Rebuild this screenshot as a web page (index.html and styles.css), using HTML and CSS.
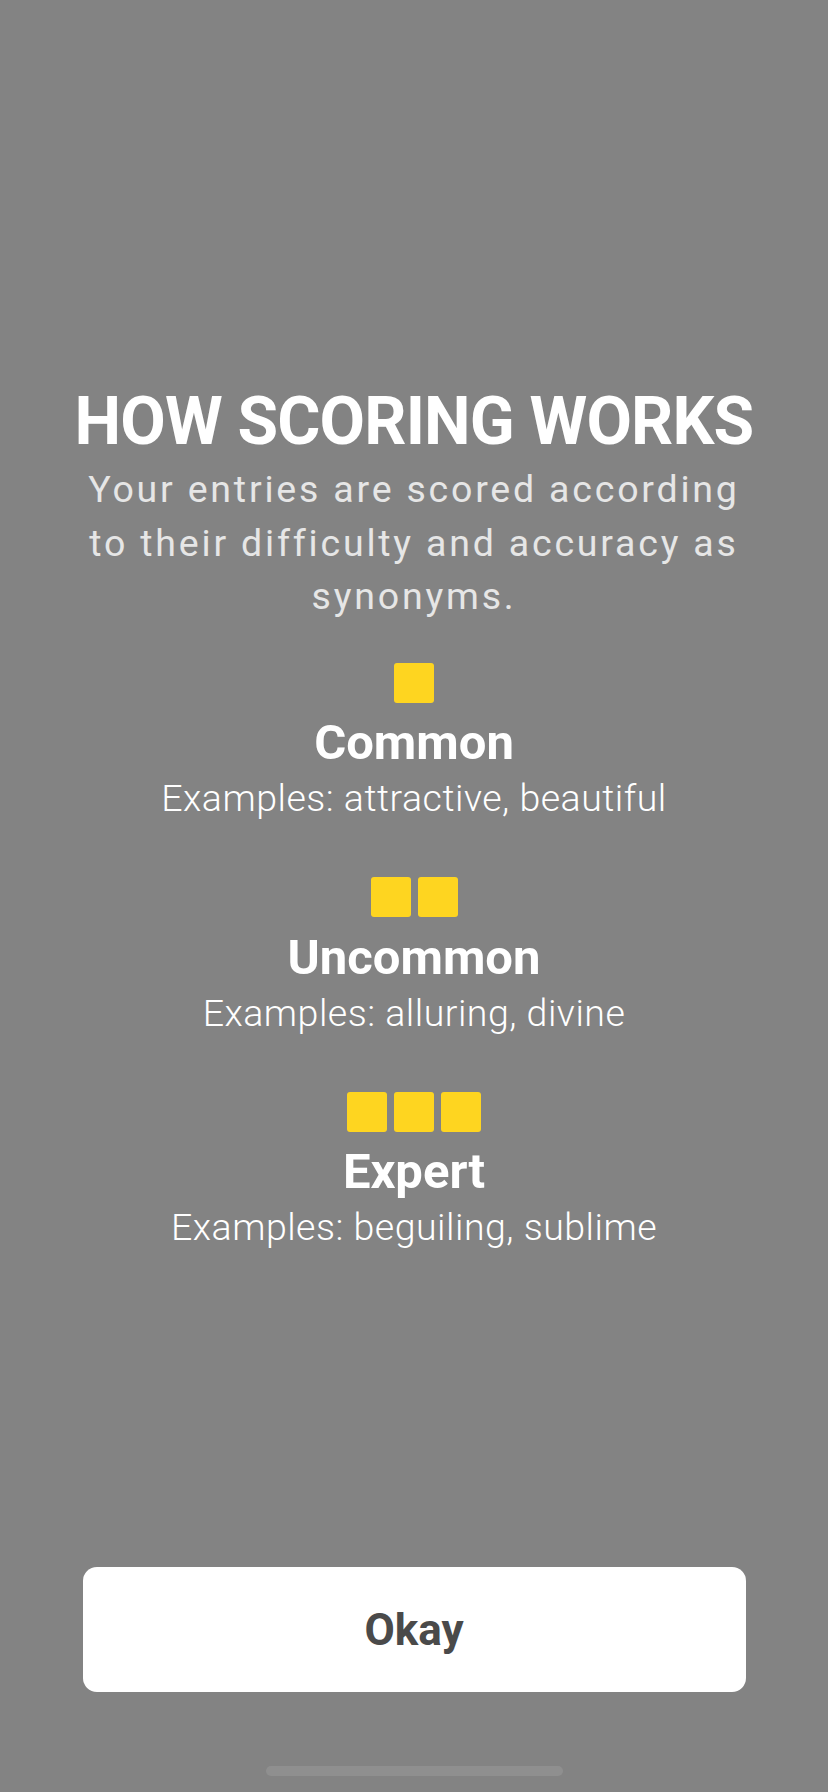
FILE: index.html
```html
<!DOCTYPE html>
<html lang="en">
<head>
<meta charset="utf-8">
<title>How Scoring Works</title>
<link rel="stylesheet" href="styles.css">
</head>
<body>
  <main class="content">
    <h1 class="title">HOW SCORING WORKS</h1>
    <p class="subtitle">Your entries are scored according to their difficulty and accuracy as synonyms.</p>

    <section class="level">
      <div class="squares"><span class="sq"></span></div>
      <h2 class="level-name">Common</h2>
      <p class="examples">Examples: attractive, beautiful</p>
    </section>

    <section class="level">
      <div class="squares"><span class="sq"></span><span class="sq"></span></div>
      <h2 class="level-name">Uncommon</h2>
      <p class="examples">Examples: alluring, divine</p>
    </section>

    <section class="level">
      <div class="squares"><span class="sq"></span><span class="sq"></span><span class="sq"></span></div>
      <h2 class="level-name">Expert</h2>
      <p class="examples">Examples: beguiling, sublime</p>
    </section>
  </main>

  <footer class="footer">
    <button class="okay" type="button">Okay</button>
    <div class="home-indicator"></div>
  </footer>
</body>
</html>
```

FILE: styles.css
```css
* { box-sizing: border-box; }

html, body {
  margin: 0;
  padding: 0;
}

body {
  width: 828px;
  height: 1792px;
  background: #838383;
  font-family: Roboto, "Noto Sans", "Liberation Sans", sans-serif;
  color: #ffffff;
  display: flex;
  flex-direction: column;
  overflow: hidden;
}

.content {
  display: flex;
  flex-direction: column;
  align-items: center;
  padding-top: 389px;
}

.title {
  margin: 0;
  font-size: 66px;
  line-height: 66px;
  font-weight: 700;
  letter-spacing: -0.85px;
  color: #ffffff;
  text-align: center;
}

.subtitle {
  margin: 8px 0 0;
  width: 670px;
  font-size: 37.5px;
  line-height: 53.6px;
  font-weight: 400;
  letter-spacing: 2.8px;
  color: #e6e6e6;
  text-align: center;
}

.level {
  display: flex;
  flex-direction: column;
  align-items: center;
  margin-top: 39px;
}

.level + .level {
  margin-top: 57px;
}

.squares {
  display: flex;
  gap: 7px;
  height: 40px;
}

.sq {
  width: 40px;
  height: 40px;
  border-radius: 3px;
  background: #fed520;
}

.level-name {
  margin: 15.5px 0 0;
  font-size: 49px;
  line-height: 49px;
  font-weight: 700;
  color: #ffffff;
}

.examples {
  margin: 9px 0 0;
  font-size: 37.5px;
  line-height: 44px;
  font-weight: 300;
  letter-spacing: 0.5px;
  color: #ffffff;
}

.footer {
  margin-top: auto;
  display: flex;
  flex-direction: column;
  align-items: center;
  padding-bottom: 16px;
}

.okay {
  width: 663px;
  height: 125px;
  border: none;
  border-radius: 14px;
  background: #ffffff;
  color: #4a4a4a;
  font-family: Roboto, "Noto Sans", "Liberation Sans", sans-serif;
  font-size: 44px;
  font-weight: 700;
  padding: 0;
}

.home-indicator {
  margin-top: 74px;
  width: 297px;
  height: 10px;
  border-radius: 5px;
  background: #8f8f8f;
}
```
